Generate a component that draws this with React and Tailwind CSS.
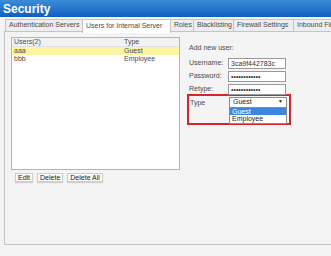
import React from "react";

const tabs = [
  { label: "Authentication Servers", w: "w-[78px]" },
  { label: "Users for Internal Server", w: "w-[89px]", active: true },
  { label: "Roles", w: "w-[24px]" },
  { label: "Blacklisting", w: "w-[41px]" },
  { label: "Firewall Settings", w: "w-[61px]" },
  { label: "Inbound Firewall", w: "w-[60px]" },
];

function Field({ label, value }) {
  return (
    <div className="flex items-center h-[12px]">
      <span className="w-[39px]">{label}</span>
      <div className="w-[58px] h-[11px] border border-[#9a9a9a] bg-white px-[2px] leading-[9px] text-[#333]">
        {value}
      </div>
    </div>
  );
}

export default function App() {
  return (
    <div
      className="w-[331px] h-[256px] overflow-hidden bg-[#f4f4f4] text-[7px] text-[#4a4a4a]"
      style={{ fontFamily: '"Liberation Sans", Arial, sans-serif' }}
    >
      {/* Title bar */}
      <div className="h-[17px] bg-gradient-to-b from-[#3c8cd9] to-[#0f5fbf] pl-[3px] flex items-center">
        <span className="text-white text-[12px] font-bold leading-none">Security</span>
      </div>

      {/* Tabs */}
      <div className="pl-[5px] pt-[2px] flex h-[15px] whitespace-nowrap">
        {tabs.map((t) => (
          <div
            key={t.label}
            className={`${t.w} shrink-0 h-[13px] border border-[#c4c4c4] -ml-px first:ml-0 flex items-center pl-[3px] overflow-hidden ${
              t.active ? "bg-white h-[14px] border-b-0" : "bg-[#eeeeee]"
            }`}
          >
            {t.label}
          </div>
        ))}
      </div>

      {/* Panel */}
      <div className="ml-[4px] -mt-px h-[214px] border border-r-0 border-[#c6c6c6] flex">
        {/* Left: user list */}
        <div className="w-[177px] pl-[6px] pt-[5px] shrink-0">
          <div className="w-[169px] h-[133px] border border-[#b4b4b4] bg-white">
            <div className="flex h-[9px] items-center bg-[#f2f2f2] border-b border-[#e2e2e2] px-[2px]">
              <span className="w-[110px]">Users(2)</span>
              <span>Type</span>
            </div>
            <div className="flex h-[8px] items-center bg-[#fbf5a3] px-[2px]">
              <span className="w-[110px]">aaa</span>
              <span>Guest</span>
            </div>
            <div className="flex h-[8px] items-center px-[2px]">
              <span className="w-[110px]">bbb</span>
              <span>Employee</span>
            </div>
          </div>
          <div className="flex gap-[4px] mt-[3px] ml-[4px]">
            {["Edit", "Delete", "Delete All"].map((b) => (
              <div
                key={b}
                className="h-[9px] px-[2px] border border-[#cfcfcf] bg-[#fafafa] text-[#222] leading-[7px] shadow-[0_1px_1px_rgba(0,0,0,0.15)]"
              >
                {b}
              </div>
            ))}
          </div>
        </div>

        {/* Right: add new user */}
        <div className="pl-[7px] pt-[11px]">
          <div className="mb-[4px]">Add new user:</div>
          <div className="flex flex-col gap-[1px]">
            <Field label="Username:" value="3ca9f442783c" />
            <Field label="Password:" value="••••••••••••" />
            <Field label="Retype:" value="••••••••••••" />
          </div>
          <div className="-ml-[2px] mt-[-2px] w-[104px] h-[31px] border-2 border-[#d8232a] pl-[1px] pt-[1px] flex">
            <span className="w-[39px] pt-[1px]">Type</span>
            <div className="w-[58px]">
              <div className="h-[11px] border border-[#8a8a8a] bg-white flex items-center justify-between px-[3px] text-[#222]">
                <span>Guest</span>
                <span className="text-[5px]">▼</span>
              </div>
              <div className="border border-t-0 border-[#8a8a8a] bg-white text-[#222]">
                <div className="h-[7px] leading-[7px] bg-[#3b86e0] text-white px-[2px]">Guest</div>
                <div className="h-[8px] leading-[8px] px-[2px]">Employee</div>
              </div>
            </div>
          </div>
        </div>
      </div>
    </div>
  );
}
